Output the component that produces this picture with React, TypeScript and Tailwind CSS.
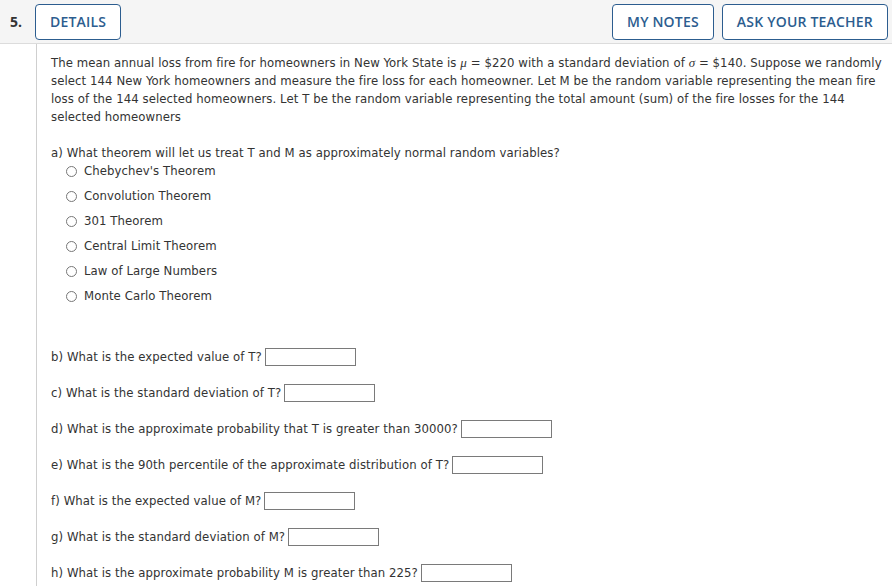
import React from "react"

const options = [
  "Chebychev's Theorem",
  "Convolution Theorem",
  "301 Theorem",
  "Central Limit Theorem",
  "Law of Large Numbers",
  "Monte Carlo Theorem",
]

const questions = [
  "b) What is the expected value of T?",
  "c) What is the standard deviation of T?",
  "d) What is the approximate probability that T is greater than 30000?",
  "e) What is the 90th percentile of the approximate distribution of T?",
  "f) What is the expected value of M?",
  "g) What is the standard deviation of M?",
  "h) What is the approximate probability M is greater than 225?",
]

function HeaderButton({ children }: { children: React.ReactNode }) {
  return (
    <button className="h-[36px] px-[14px] rounded-[4px] border border-[#2c5d8f] bg-white text-[#2c5d8f] text-[14px] font-semibold tracking-[0.2px] font-['Open_Sans',sans-serif]">
      {children}
    </button>
  )
}

export default function App() {
  return (
    <div className="w-[892px] h-[586px] overflow-hidden bg-white text-[#333] font-['Tahoma','DejaVu_Sans_Condensed','DejaVu_Sans',sans-serif] text-[13px] tracking-[0.08px]">
      {/* header bar */}
      <div className="h-[44px] bg-[#f5f5f5] border-b border-[#dcdcdc] flex items-center pl-[10px] pr-[4px]">
        <span className="w-[25px] text-[14px] font-bold text-[#333] font-['Open_Sans',sans-serif]">5.</span>
        <HeaderButton>DETAILS</HeaderButton>
        <div className="ml-auto flex gap-[8px]">
          <HeaderButton>MY NOTES</HeaderButton>
          <HeaderButton>ASK YOUR TEACHER</HeaderButton>
        </div>
      </div>

      <div className="ml-[36px] border-l border-[#cfcfcf] pl-[14px] pr-[4px] pt-[10px] h-[542px]">
        <p className="leading-[18px]">
          The mean annual loss from fire for homeowners in New York State is <i className="font-['Liberation_Serif',serif]">μ</i> = $220 with a standard deviation of <i className="font-['Liberation_Serif',serif]">σ</i> = $140. Suppose we randomly select 144 New York homeowners and measure the fire loss for each homeowner. Let M be the random variable representing the mean fire loss of the 144 selected homeowners. Let T be the random variable representing the total amount (sum) of the fire losses for the 144 selected homeowners
        </p>

        <p className="mt-[18px] leading-[18px]">a) What theorem will let us treat T and M as approximately normal random variables?</p>
        <div className="pl-[15px] flex flex-col gap-[7px]">
          {options.map((o) => (
            <label key={o} className="flex items-center h-[18px] leading-[18px]">
              <span className="w-[11px] h-[11px] rounded-full border border-[#777] bg-white mr-[7px]" />
              {o}
            </label>
          ))}
        </div>

        <div className="mt-[43px] flex flex-col gap-[18px]">
          {questions.map((q) => (
            <div key={q} className="flex items-center h-[18px] leading-[18px]">
              <span>{q}</span>
              <span className="w-[91px] h-[18px] ml-[3px] border border-[#7a7a7a] bg-white" />
            </div>
          ))}
        </div>
      </div>
    </div>
  )
}
